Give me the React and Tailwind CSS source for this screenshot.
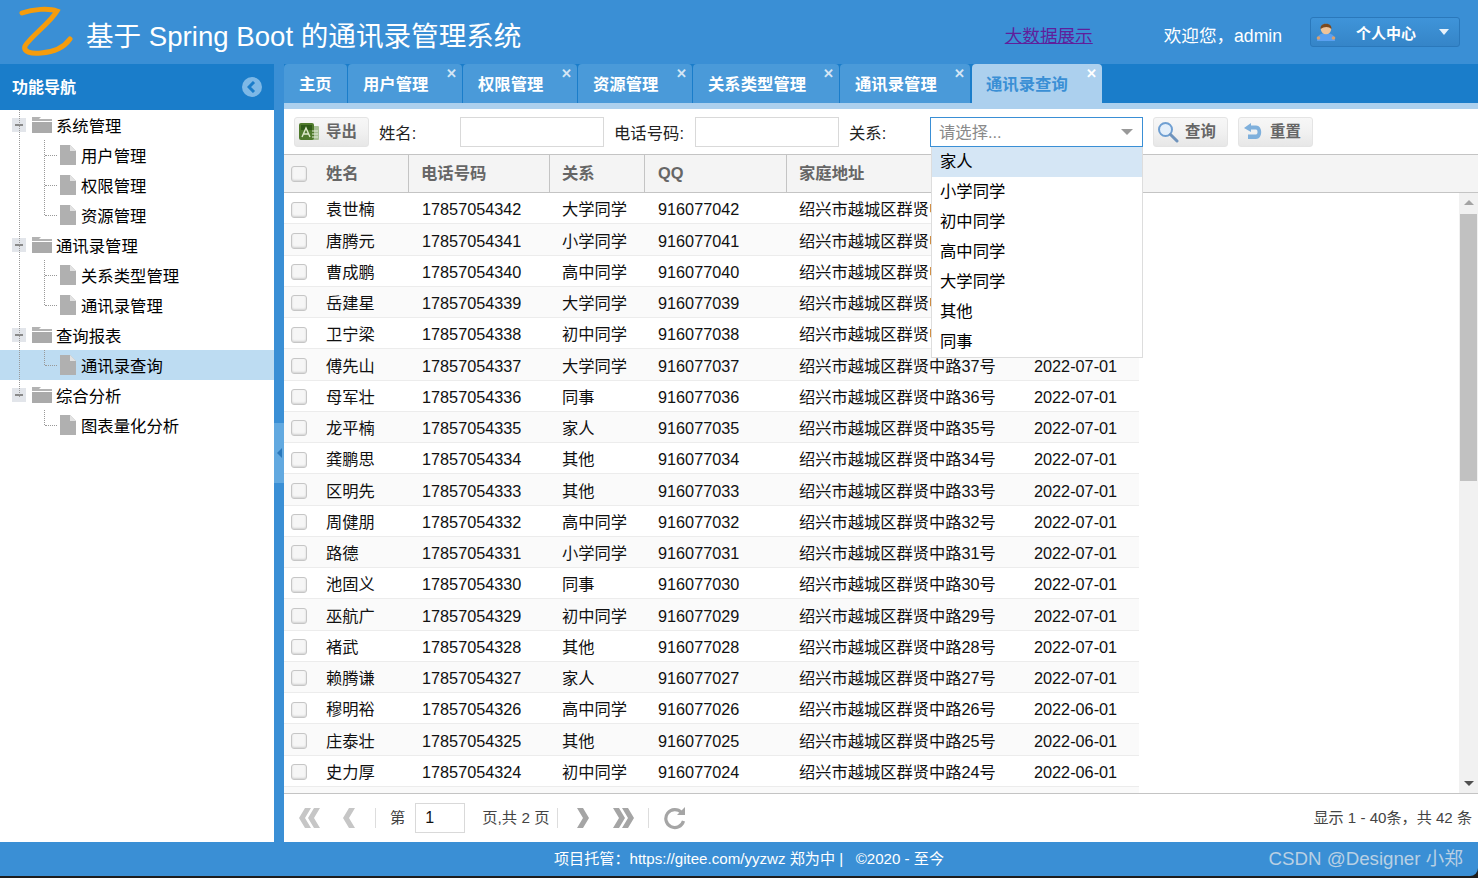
import React from 'react';

const names = ['袁世楠', '唐腾元', '曹成鹏', '岳建星', '卫宁梁', '傅先山', '母军壮', '龙平楠', '龚鹏思', '区明先', '周健朋', '路德', '池固义', '巫航广', '褚武', '赖腾谦', '穆明裕', '庄泰壮', '史力厚'];
const relations = ['大学同学', '小学同学', '高中同学', '大学同学', '初中同学', '大学同学', '同事', '家人', '其他', '其他', '高中同学', '小学同学', '同事', '初中同学', '其他', '家人', '高中同学', '其他', '初中同学'];
const rows = names.map((name, i) => ({
    name,
    phone: 17857054342 - i,
    relation: relations[i],
    qq: 916077042 - i,
    address: `绍兴市越城区群贤中路${42 - i}号`,
    date: 42 - i > 26 ? '2022-07-01' : '2022-06-01',
}));
const tabs = [
    { label: '主页', width: 'w-[63px]' },
    { label: '用户管理', width: 'w-[114px]', close: true },
    { label: '权限管理', width: 'w-[114px]', close: true },
    { label: '资源管理', width: 'w-[114px]', close: true },
    { label: '关系类型管理', width: 'w-[146px]', close: true },
    { label: '通讯录管理', width: 'w-[130px]', close: true },
];
const tree = [
    { label: '系统管理', items: ['用户管理', '权限管理', '资源管理'] },
    { label: '通讯录管理', items: ['关系类型管理', '通讯录管理'] },
    { label: '查询报表', items: ['通讯录查询'] },
    { label: '综合分析', items: ['图表量化分析'] },
];
const options = ['家人', '小学同学', '初中同学', '高中同学', '大学同学', '其他', '同事'];
const gridCols = 'grid grid-cols-[30px_95px_141px_95px_142px_235px_117px]';

const Logo = () => (
    <svg width="56" height="52" viewBox="0 0 56 52" className="ml-[19px] shrink-0">
        <path d="M3 7 C14 3 30 2 38 5 C31 17 12 30 6 40 C4 46 12 48 22 47 C36 46 46 40 51 33" fill="none" stroke="#f59c0c" strokeWidth="5" strokeLinecap="round" />
    </svg>
);

const Avatar = () => (
    <svg width="20" height="20" viewBox="0 0 20 20">
        <path d="M1 19 C1 13 5 11 10 11 C15 11 19 13 19 19 Z" fill="#5aa0f0" />
        <circle cx="10" cy="7" r="5.2" fill="#eec39a" />
        <path d="M4.6 7 C3.5 0 16.5 0 15.4 7 C13 4.2 8 4.2 4.6 7 Z" fill="#7a4a20" />
        <circle cx="2.5" cy="16" r="1.8" fill="#d8a070" />
        <circle cx="17.5" cy="16" r="1.8" fill="#d8a070" />
    </svg>
);

const ExcelIcon = () => (
    <svg width="20" height="20" viewBox="0 0 20 20">
        <rect x="7" y="4" width="13" height="14" rx="1" fill="#a9c097" />
        <rect x="0" y="1" width="15" height="17" rx="2" fill="#4f7a2c" />
        <path d="M2 3 H13 V8 H2 Z" fill="#2f5a18" />
        <path d="M3 15 L7 6 L11 15 M4.6 12 H9.4" stroke="#dfeacb" strokeWidth="1.4" fill="none" />
        <path d="M13 9 H19 M13 12 H19 M13 15 H19" stroke="#e7efdc" strokeWidth="1" />
    </svg>
);

const SearchIcon = () => (
    <svg width="22" height="22" viewBox="0 0 22 22">
        <circle cx="8.5" cy="8.5" r="6.5" fill="#e4effa" stroke="#6f9fd2" strokeWidth="2" />
        <path d="M13.5 13.5 L20 20" stroke="#6f93bc" strokeWidth="3" strokeLinecap="round" />
    </svg>
);

const UndoIcon = () => (
    <svg width="20" height="20" viewBox="0 0 20 20">
        <path d="M8 1 L1 6 L8 10 V7.5 H13 C15 7.5 15 12.5 13 12.5 H5 V17 H13 C20 17 20 3.5 13 3.5 H8 Z" fill="#7fb0dc" />
    </svg>
);

const FolderIcon = () => (
    <svg width="20" height="16" viewBox="0 0 20 16" className="shrink-0">
        <path d="M0 2 H7 L9 0 H0 Z M0 2 H20 V4 H0 Z" fill="#b3b3b3" />
        <path d="M0 5 H20 V16 H0 Z" fill="#aaaaaa" />
    </svg>
);

const FileIcon = () => (
    <svg width="16" height="20" viewBox="0 0 16 20" className="shrink-0">
        <path d="M0 0 H10 L16 6 V20 H0 Z" fill="#b0b0b0" />
        <path d="M10 0 L16 6 H10 Z" fill="#e2e2e2" />
    </svg>
);

const Checkbox = () => (
    <span className="block w-[16px] h-[16px] rounded-[3px] border border-[#c6c6c6] bg-[#f6f6f6] shadow-[inset_0_-1px_2px_rgba(0,0,0,0.15)]" />
);

const ToolButton = ({ icon, label, className = '' }) => (
    <button className={`flex items-center w-[75px] h-[30px] pl-[3px] gap-[6px] border border-[#e4e4e4] rounded-[3px] bg-gradient-to-b from-[#f7f7f7] via-[#f1f1f1] to-[#e7e7e7] text-[#666] text-[15.4px] font-bold shrink-0 ${className}`}>
        <span className="w-[22px] flex justify-center">{icon}</span>
        {label}
    </button>
);

const TreeGroup = ({ label, items }) => (
    <div className="relative">
        <div className="flex items-center h-[30px] pl-[12px] text-[16.35px] text-black">
            <span className="flex items-center justify-center w-[14px] h-[14px] bg-[#e2e5ea] shrink-0">
                <span className="block w-[8px] h-[2px] bg-[#8a8a8a]" />
            </span>
            <span className="ml-[6px] mr-[4px]"><FolderIcon /></span>
            <span className="pt-[3px]">{label}</span>
        </div>
        {items.map((item) => (
            <div key={item} className={`flex items-center h-[30px] pl-[45px] text-[16.35px] text-black ${item === '通讯录查询' ? 'bg-[#bddcf2]' : ''}`}>
                <span className="block w-[12px] border-t border-dotted border-[#999]" />
                <span className="ml-[3px] mr-[5px]"><FileIcon /></span>
                <span className="pt-[3px]">{item}</span>
            </div>
        ))}
        <span className="absolute left-[44px] top-[30px] bottom-[15px] border-l border-dotted border-[#999]" />
    </div>
);

const Sidebar = () => (
    <aside className="w-[274px] shrink-0 flex flex-col bg-white">
        <div className="flex items-center justify-between h-[46px] pl-[12px] pr-[12px] bg-[#1a7dca] text-white text-[16px] font-bold">
            <span className="pt-[2px]">功能导航</span>
            <span className="flex items-center justify-center w-[20px] h-[20px] rounded-full bg-[#7db8e6]">
                <svg width="10" height="12" viewBox="0 0 10 12">
                    <path d="M7 1 L2 6 L7 11" fill="none" stroke="#1a7dca" strokeWidth="3" />
                </svg>
            </span>
        </div>
        <div className="relative">
            {tree.map((group) => <TreeGroup key={group.label} {...group} />)}
            <span className="absolute left-[19px] top-0 h-[287px] border-l border-dotted border-[#999]" />
        </div>
    </aside>
);

const Tabs = () => (
    <div className="flex items-end gap-[1px] h-[39px] bg-[#1a7dca] shrink-0">
        {tabs.map((tab) => (
            <div key={tab.label} className={`relative flex items-center h-[39px] pt-[2px] pl-[15px] ${tab.width} rounded-t-[4px] bg-[#4a9ad9] text-white text-[16.35px] font-bold`}>
                {tab.label}
                {tab.close && <span className="absolute right-[5px] top-[1px] text-[#d5e6f5] text-[13px] leading-[18px]">✕</span>}
            </div>
        ))}
        <div className="relative flex items-center ml-[1px] h-[39px] pt-[2px] pl-[14px] w-[130px] rounded-t-[4px] bg-[#acd0ee] text-[#3a8fd5] text-[16.35px] font-bold">
            通讯录查询
            <span className="absolute right-[5px] top-[1px] text-white text-[13px] leading-[18px]">✕</span>
        </div>
    </div>
);

const Toolbar = () => (
    <div className="relative flex items-center h-[45px] pl-[10px] text-[16.35px] text-[#222] shrink-0">
        <ToolButton icon={<ExcelIcon />} label="导出" />
        <span className="ml-[10px] w-[81px] pt-[3px]">姓名:</span>
        <input className="w-[144px] h-[30px] border border-[#d9d9d9] bg-white" />
        <span className="ml-[10px] w-[81px] pt-[3px]">电话号码:</span>
        <input className="w-[144px] h-[30px] border border-[#d9d9d9] bg-white" />
        <span className="ml-[10px] w-[81px] pt-[3px]">关系:</span>
        <div className="relative w-[213px] h-[30px] shrink-0">
            <div className="flex items-center justify-between h-full pl-[8px] pr-[9px] border border-[#3a8fd5] bg-white text-[#8a8a8a] text-[16.35px]">
                <span className="pt-[2px]">请选择...</span>
                <span className="w-0 h-0 border-x-[6px] border-x-transparent border-t-[6px] border-t-[#999]" />
            </div>
            <ul className="absolute z-10 left-[1px] top-[30px] w-[212px] border border-t-0 border-[#ddd] bg-white">
                {options.map((option, i) => (
                    <li key={option} className={`flex items-center h-[30px] pl-[8px] text-[16.35px] text-black ${i === 0 ? 'bg-[#d5e6f5]' : ''}`}>{option}</li>
                ))}
            </ul>
        </div>
        <ToolButton icon={<SearchIcon />} label="查询" className="ml-[10px]" />
        <ToolButton icon={<UndoIcon />} label="重置" className="ml-[10px]" />
    </div>
);

const TableHead = () => (
    <div className="h-[39px] border-y border-[#c4c4c4] bg-[#f4f4f4] shrink-0">
        <div className={`${gridCols} h-full w-[855px] text-[16.35px] font-bold text-[#666] items-stretch`}>
            <div className="flex items-center pl-[7px]"><Checkbox /></div>
            {['姓名', '电话号码', '关系', 'QQ', '家庭地址', '日期'].map((title) => (
                <div key={title} className={`flex items-center border-r border-[#c4c4c4] ${title === 'QQ' ? 'pl-[13px]' : 'pl-[12px]'}`}>{title}</div>
            ))}
        </div>
    </div>
);

const TableBody = () => (
    <div className="flex flex-1 min-h-0 overflow-hidden">
        <div className="flex-1 min-w-0">
            {rows.map((row, i) => (
                <div key={row.phone} className={`${gridCols} items-center w-[855px] h-[31.25px] pt-[3px] border-b border-[#ececec] text-[16.25px] text-[#111] ${i % 2 ? 'bg-[#fafafa]' : 'bg-white'}`}>
                    <div className="pl-[7px]"><Checkbox /></div>
                    <div className="pl-[12px]">{row.name}</div>
                    <div className="pl-[13px]">{row.phone}</div>
                    <div className="pl-[12px]">{row.relation}</div>
                    <div className="pl-[13px]">{row.qq}</div>
                    <div className="pl-[12px] whitespace-nowrap">{row.address}</div>
                    <div className="pl-[12px]">{row.date}</div>
                </div>
            ))}
            <div className="w-[855px] h-[7px] bg-[#fafafa]" />
        </div>
        <div className="flex flex-col items-center w-[19px] shrink-0 bg-[#f1f1f1]">
            <span className="mt-[7px] w-0 h-0 border-x-[5px] border-x-transparent border-b-[5px] border-b-[#a3a3a3]" />
            <span className="mt-[9px] w-[17px] h-[267px] bg-[#c1c1c1]" />
            <span className="mt-auto mb-[7px] w-0 h-0 border-x-[5px] border-x-transparent border-t-[5px] border-t-[#505050]" />
        </div>
    </div>
);

const PagerIcon = ({ d, width = 21, color = '#a5a5a5' }) => (
    <svg width={width} height="22" viewBox={`0 0 ${width} 22`} className="shrink-0">
        <path d={d} fill={color} />
    </svg>
);

const Pagination = () => (
    <div className="flex items-center h-[49px] border-t border-[#c4c4c4] bg-white pl-[15px] pr-[6px] text-[15.3px] text-[#444] shrink-0">
        <PagerIcon color="#c6c6c6" d="M12 1 H6 L0 11 L6 21 H12 L6 11 Z M21 1 H15 L9 11 L15 21 H21 L15 11 Z" />
        <span className="ml-[23px]"><PagerIcon color="#c6c6c6" width={13} d="M12 1 H6 L0 11 L6 21 H12 L6 11 Z" /></span>
        <span className="ml-[19px] h-[20px] border-l border-[#ddd]" />
        <span className="ml-[14px] pt-[1px]">第</span>
        <input readOnly value="1" className="ml-[10px] w-[50px] h-[30px] pl-[9px] border border-[#d9d9d9] text-[16px] text-[#111]" />
        <span className="ml-[17px] pt-[1px]">页,共 2 页</span>
        <span className="ml-[8px] h-[20px] border-l border-[#ddd]" />
        <span className="ml-[18px]"><PagerIcon width={13} d="M1 1 H7 L13 11 L7 21 H1 L7 11 Z" /></span>
        <span className="ml-[24px]"><PagerIcon d="M0 1 H6 L12 11 L6 21 H0 L6 11 Z M9 1 H15 L21 11 L15 21 H9 L15 11 Z" /></span>
        <span className="ml-[14px] h-[20px] border-l border-[#ddd]" />
        <svg width="24" height="24" viewBox="0 0 24 24" className="ml-[14px] shrink-0">
            <path d="M18.5 6.5 A9 9 0 1 0 20.5 15" fill="none" stroke="#a5a5a5" strokeWidth="3.2" />
            <path d="M14 9 H22 V1 Z" fill="#a5a5a5" />
        </svg>
        <span className="ml-auto pt-[1px] text-[15.1px]">显示 1 - 40条，共 42 条</span>
    </div>
);

const App = () => {
    return (
        <div className="flex flex-col w-full h-[878px] overflow-hidden bg-[#1d1d1d] font-[family-name:'Liberation_Sans','Noto_Sans_CJK_SC',sans-serif]">
            {/* Header */}
            <header className="flex items-center h-[64px] shrink-0 bg-[#3a8fd5] text-white">
                <Logo />
                <h1 className="ml-[11px] pt-[9px] text-[27.6px]">基于 Spring Boot 的通讯录管理系统</h1>
                <a className="ml-auto pt-[8px] text-[17.6px] text-[#5f1f9c] underline">大数据展示</a>
                <span className="ml-[71px] pt-[8px] text-[17.6px]">欢迎您，admin</span>
                <button className="flex items-center ml-[28px] mr-[18px] w-[150px] h-[30px] pl-[5px] border border-[#2a78bb] rounded-[3px] bg-gradient-to-b from-[#3f94d9] to-[#3585c8] text-[15px] font-bold">
                    <Avatar />
                    <span className="ml-[20px] pt-[4px]">个人中心</span>
                    <span className="ml-auto mr-[10px] w-0 h-0 border-x-[5px] border-x-transparent border-t-[6px] border-t-[#e8f2fb]" />
                </button>
            </header>

            {/* Main */}
            <div className="flex flex-1 min-h-0 bg-[#3a8fd5]">
                <Sidebar />
                <div className="flex items-center justify-center w-[10px] shrink-0">
                    <div className="flex items-center justify-center w-full h-[60px] bg-[#62a9e0]">
                        <span className="w-0 h-0 border-y-[5px] border-y-transparent border-r-[5px] border-r-[#2a78bb]" />
                    </div>
                </div>
                <main className="flex flex-col flex-1 min-w-0 bg-white">
                    <Tabs />
                    <div className="h-[6px] bg-[#acd0ee] shrink-0" />
                    <Toolbar />
                    <TableHead />
                    <TableBody />
                    <Pagination />
                </main>
            </div>

            {/* Footer */}
            <footer className="relative flex items-center justify-center h-[34px] shrink-0 mb-[2px] pl-[20px] rounded-br-[8px] bg-[#3a8fd5] text-white text-[15.1px]">
                <span>项目托管：https://gitee.com/yyzwz 郑为中 |&nbsp;&nbsp;&nbsp;©2020 - 至今</span>
                <span className="absolute right-[15px] text-[18.7px] text-[#b9d0e4]">CSDN @Designer 小郑</span>
            </footer>
        </div>
    );
};

export default App;
